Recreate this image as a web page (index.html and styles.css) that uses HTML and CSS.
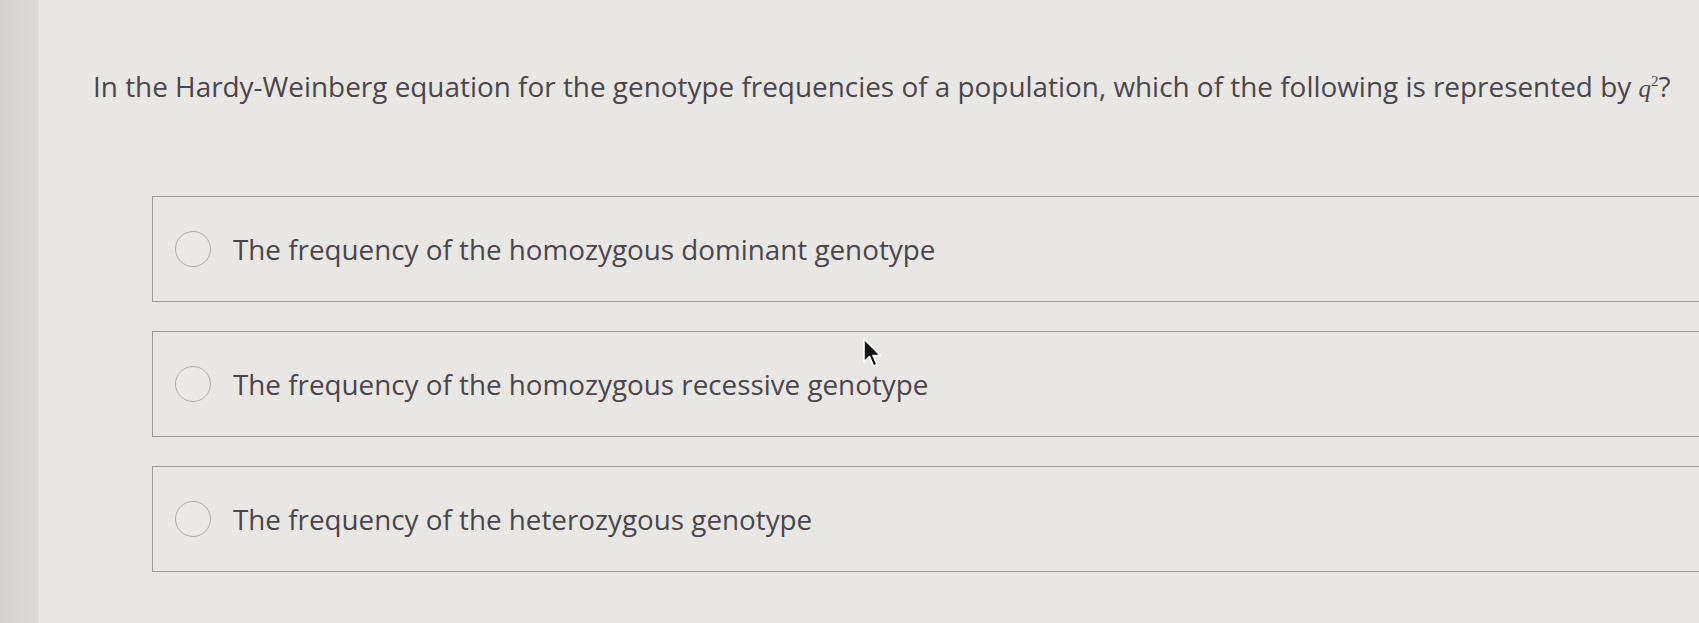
FILE: index.html
```html
<!DOCTYPE html>
<html>
<head>
<meta charset="utf-8">
<link rel="stylesheet" href="styles.css">
</head>
<body>
<div class="screen">
  <div class="edge"></div>
  <main class="content">
    <p class="question">In the Hardy-Weinberg equation for the genotype frequencies of a population, which of the following is represented by <span class="math"><i>q</i><sup>2</sup></span>?</p>
    <div class="options">
      <label class="option"><span class="radio"></span><span class="label">The frequency of the homozygous dominant genotype</span></label>
      <label class="option"><span class="radio"></span><span class="label">The frequency of the homozygous recessive genotype</span></label>
      <label class="option"><span class="radio"></span><span class="label">The frequency of the heterozygous genotype</span></label>
    </div>
  </main>
  <svg class="cursor" width="22" height="32" viewBox="0 0 22 32">
    <path d="M2 1 L2 24 L7.5 18.5 L11.5 28 L15 26.5 L11 17.5 L18.5 17.5 Z" fill="#111" stroke="#fff" stroke-width="1.6" stroke-linejoin="round"/>
  </svg>
</div>
</body>
</html>
```
FILE: styles.css
```css
html, body {
  margin: 0;
  padding: 0;
  width: 1699px;
  height: 623px;
  overflow: hidden;
  background: #e7e6e2;
}
.screen {
  position: relative;
  display: flex;
  width: 1699px;
  height: 623px;
  overflow: hidden;
  background: #e8e7e3;
}
.edge {
  flex: 0 0 38px;
  background: linear-gradient(90deg, #d2d1cd, #dcdbd7);
  border-right: 1px solid #e0dfdb;
}
.content {
  flex: 1;
  padding-top: 65px;
  font-family: "Open Sans", "Noto Sans", sans-serif;
  color: #4b464d;
}
.question {
  margin: 0 0 0 54px;
  font-size: 27.9px;
  line-height: 42px;
  white-space: nowrap;
}
.math {
  font-family: "Liberation Serif", "DejaVu Serif", serif;
  font-size: 25px;
}
.math sup {
  font-size: 15px;
  vertical-align: 11px;
  line-height: 0;
}
.options {
  display: flex;
  flex-direction: column;
  gap: 29px;
  margin-top: 86px;
  margin-left: 113px;
  margin-right: -20px;
}
.option {
  display: flex;
  align-items: center;
  height: 106px;
  box-sizing: border-box;
  border: 1.5px solid #a09e9b;
  padding-left: 22px;
}
.radio {
  flex: 0 0 auto;
  width: 36px;
  height: 36px;
  box-sizing: border-box;
  border: 1.8px solid #b0aeab;
  border-radius: 50%;
  background: #eae9e5;
  margin-right: 22px;
}
.label {
  font-size: 27.8px;
  line-height: 40px;
  white-space: nowrap;
}
.cursor {
  position: absolute;
  left: 862px;
  top: 338px;
}
```
